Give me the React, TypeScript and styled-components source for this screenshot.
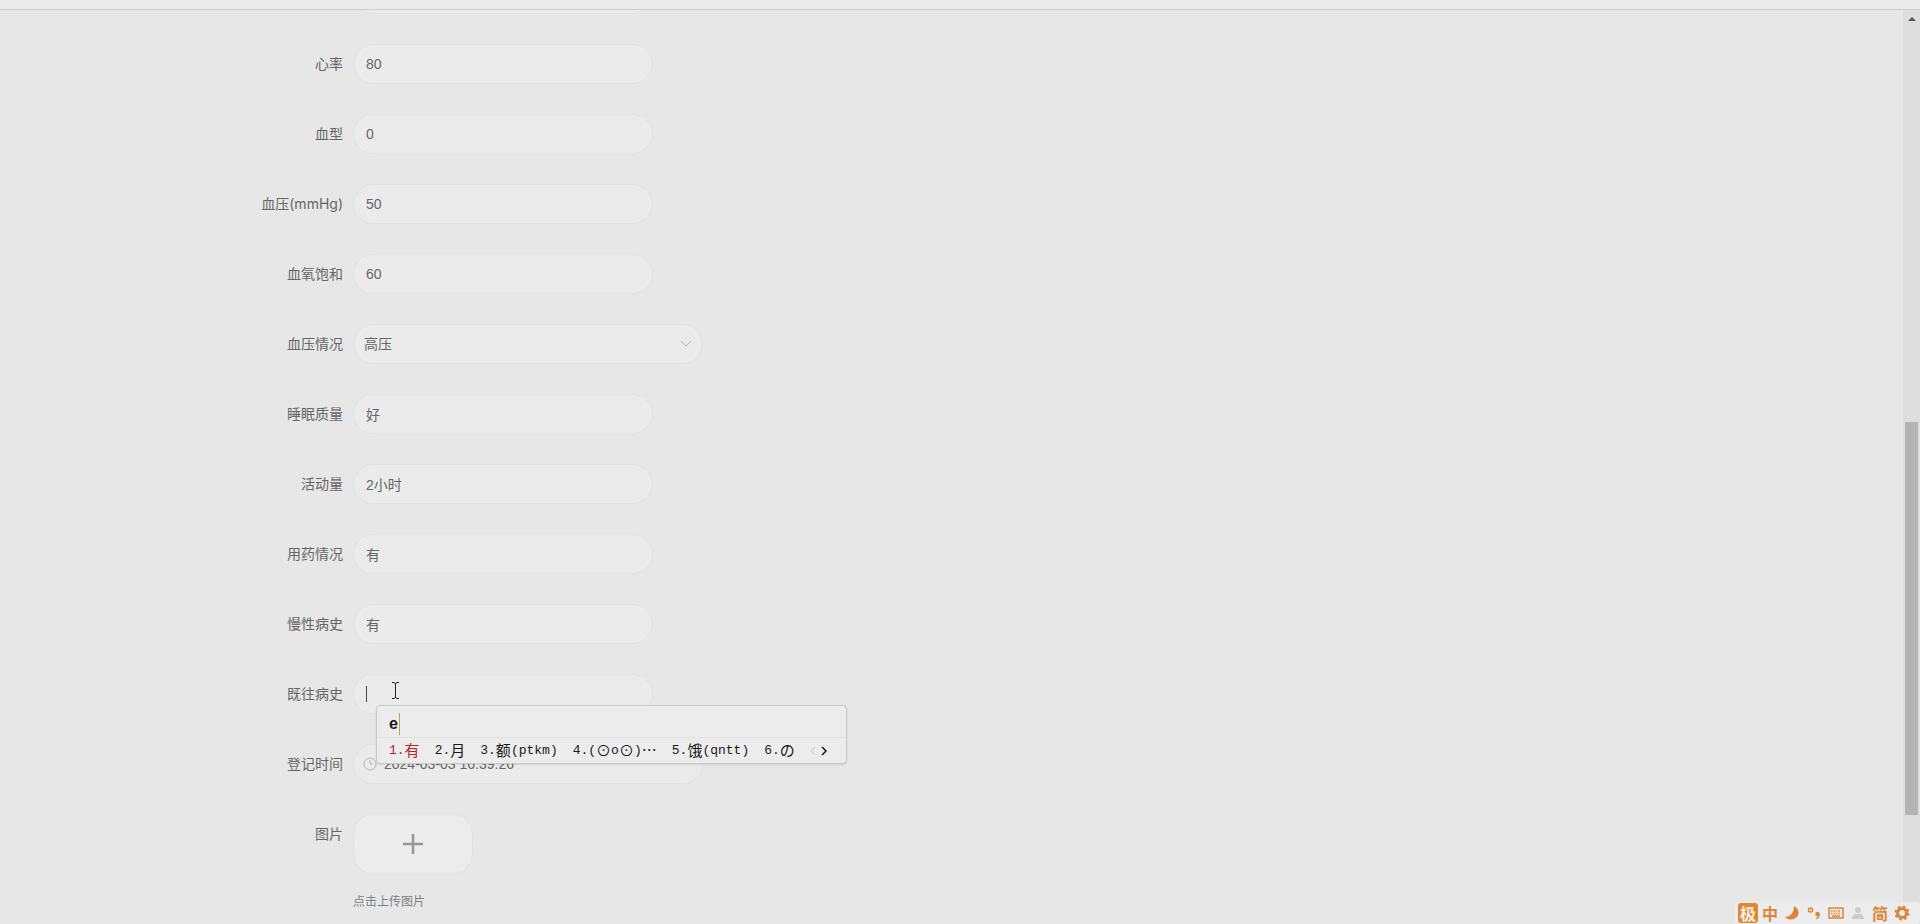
import React from "react";
import styled, { createGlobalStyle } from "styled-components";

const GlobalStyle = createGlobalStyle`
  * { box-sizing: border-box; }
  body {
    margin: 0;
    background: #e7e7e7;
    color: #666;
    font: 14px/20px "Liberation Sans", "Noto Sans CJK SC", sans-serif;
  }
  button, input, select { font: inherit; color: inherit; }
`;

const Screen = styled.div`
  position: relative;
  display: flex;
  flex-direction: column;
  height: 100vh;
  overflow: hidden;
`;

const TopBar = styled.header`
  flex: none;
  height: 10px;
  background: #ebebeb;
  border-bottom: 1px solid #cecece;
`;

const Body = styled.div`
  flex: 1;
  display: flex;
  min-height: 0;
`;

const Main = styled.main`
  flex: 1;
  overflow: hidden;
`;

const Form = styled.form`
  display: flex;
  flex-direction: column;
  gap: 30px;
  margin-top: -36px;
  padding-left: 153px;
`;

const Row = styled.div`
  display: flex;
  align-items: flex-start;
`;

const Label = styled.label`
  flex: none;
  width: 200px;
  padding-right: 10px;
  font-family: Inter, "Noto Sans CJK SC", sans-serif;
  line-height: 40px;
  text-align: right;
`;

const Control = styled.div<{ $wide?: boolean }>`
  position: relative;
  width: ${(p) => (p.$wide ? 350 : 300)}px;
`;

const fieldSkin = `
  display: block;
  width: 100%;
  height: 40px;
  border: 1px solid #e1e1e1;
  border-radius: 20px;
  background: #ebebeb;
  outline: none;
`;

const TextInput = styled.input<{ $icon?: boolean }>`
  ${fieldSkin}
  padding: 0 12px 0 ${(p) => (p.$icon ? 30 : 12)}px;
`;

const Select = styled.select`
  ${fieldSkin}
  appearance: none;
  padding: 0 30px 0 10px;
`;

const FieldIcon = styled.svg<{ $side: "left" | "right" }>`
  position: absolute;
  top: 13px;
  ${(p) => p.$side}: 10px;
  width: 14px;
  height: 14px;
  fill: none;
  stroke: #b4b4b4;
  pointer-events: none;
`;

const Caret = styled.span`
  position: absolute;
  top: 12px;
  left: 13px;
  width: 1px;
  height: 16px;
  background: #444;
`;

const Pointer = styled.svg`
  position: absolute;
  top: 8px;
  left: 38px;
  width: 9px;
  height: 17px;
  fill: none;
  stroke: #222;
`;

const Upload = styled.div`
  display: flex;
  flex-direction: column;
  gap: 18px;
`;

const UploadButton = styled.button`
  display: flex;
  align-items: center;
  justify-content: center;
  width: 120px;
  height: 60px;
  padding: 0;
  border: 1px solid #e1e1e1;
  border-radius: 20px;
  background: #ececec;
`;

const Tip = styled.p`
  margin: 0;
  font-size: 12px;
  color: #7d8086;
`;

const ImeWindow = styled.div`
  position: absolute;
  z-index: 2;
  top: 31px;
  left: 23px;
  width: 471px;
  border: 1px solid #c9c9c9;
  border-radius: 4px;
  background: #ececec;
  color: #1a1a1a;
  box-shadow: 0 1px 2px rgba(0, 0, 0, 0.1);
`;

const Composition = styled.div`
  display: flex;
  align-items: center;
  height: 32px;
  padding: 4px 12px 0;
  border-bottom: 1px solid #e2e2e2;
  font-size: 16px;
  font-weight: bold;

  &::after {
    content: "";
    width: 1px;
    height: 22px;
    margin-left: 1px;
    background: #d39a45;
  }
`;

const Candidates = styled.div`
  display: flex;
  align-items: center;
  gap: 15px;
  height: 25px;
  padding: 0 12px;
`;

const Candidate = styled.button<{ $active?: boolean }>`
  display: flex;
  align-items: center;
  padding: 0;
  border: 0;
  background: none;
  color: ${(p) => (p.$active ? "#b8232b" : "#1a1a1a")};
  font: 13px/20px "Liberation Mono", monospace;
`;

const Wide = styled.span`
  padding-bottom: 2px;
  font: 15px/20px "Noto Sans CJK SC", sans-serif;
`;

const Pager = styled.svg`
  width: 20px;
  height: 12px;
  fill: none;
`;

const Scrollbar = styled.div`
  flex: none;
  display: flex;
  flex-direction: column;
  align-items: center;
  width: 17px;
  background: #dedede;
`;

const ScrollArrow = styled.button`
  flex: none;
  display: flex;
  align-items: center;
  justify-content: center;
  width: 17px;
  height: 17px;
  padding: 0;
  border: 0;
  background: none;
`;

const Track = styled.div<{ $share: number }>`
  flex: ${(p) => p.$share} 0 0;
`;

const Thumb = styled(Track)`
  width: 13px;
  background: #b4b4b4;
`;

const Tray = styled.div`
  position: absolute;
  right: 0;
  bottom: 0;
  z-index: 3;
  display: flex;
  align-items: center;
  gap: 2px;
  height: 22px;
  padding: 0 8px 0 4px;
  border-radius: 4px;
  background: #ececec;
`;

const TrayButton = styled.button<{ $filled?: boolean }>`
  display: flex;
  align-items: center;
  justify-content: center;
  width: 20px;
  height: 20px;
  padding: 0;
  border: 0;
  border-radius: 3px;
  background: ${(p) => (p.$filled ? "#dd8a33" : "none")};
  color: ${(p) => (p.$filled ? "#f5efe8" : "#d9863a")};
  font: bold 16px/20px "Noto Sans CJK SC", sans-serif;
`;

type Field = { id: string; label: string; value: string };

const vitals: Field[] = [
  { id: "rate", label: "心率", value: "80" },
  { id: "type", label: "血型", value: "0" },
  { id: "pressure", label: "血压(mmHg)", value: "50" },
  { id: "oxygen", label: "血氧饱和", value: "60" },
];

const habits: Field[] = [
  { id: "sleep", label: "睡眠质量", value: "好" },
  { id: "activity", label: "活动量", value: "2小时" },
  { id: "medicine", label: "用药情况", value: "有" },
  { id: "chronic", label: "慢性病史", value: "有" },
];

function TextRow({ id, label, value }: Field) {
  return (
    <Row>
      <Label htmlFor={id}>{label}</Label>
      <Control>
        <TextInput id={id} defaultValue={value} />
      </Control>
    </Row>
  );
}

function ImePanel() {
  return (
    <ImeWindow>
      <Composition>e</Composition>
      <Candidates>
        <Candidate type="button" $active>1.<Wide>有</Wide></Candidate>
        <Candidate type="button">2.<Wide>月</Wide></Candidate>
        <Candidate type="button">3.<Wide>额</Wide>(ptkm)</Candidate>
        <Candidate type="button">4.(<Wide>⊙</Wide>o<Wide>⊙</Wide>)<Wide>…</Wide></Candidate>
        <Candidate type="button">5.<Wide>饿</Wide>(qntt)</Candidate>
        <Candidate type="button">6.<Wide>の</Wide></Candidate>
        <Pager viewBox="0 0 20 12">
          <path d="M5 2L1 6l4 4" stroke="#c4c4c4" />
          <path d="M12 2l4 4-4 4" stroke="#1a1a1a" strokeWidth="1.5" />
        </Pager>
      </Candidates>
    </ImeWindow>
  );
}

function ImeTray() {
  return (
    <Tray>
      <TrayButton type="button" $filled>极</TrayButton>
      <TrayButton type="button">中</TrayButton>
      <TrayButton type="button" aria-label="moon">
        <svg width="14" height="14" viewBox="0 0 14 14" fill="currentColor">
          <path d="M9 0c4 2 6 6 3.500 10C10 14 4 15 0 11c5 0 9-4 9-11z" />
        </svg>
      </TrayButton>
      <TrayButton type="button" aria-label="punctuation">
        <svg width="14" height="14" viewBox="0 0 14 14" fill="currentColor">
          <circle cx="3.5" cy="4" r="2" fill="none" stroke="currentColor" strokeWidth="1.5" />
          <circle cx="10.5" cy="8" r="2.3" />
          <path d="M12.8 8c0 3-1.500 5-4 5.500v-1.200c1.500-.5 2-1.500 2-3z" />
        </svg>
      </TrayButton>
      <TrayButton type="button" aria-label="keyboard">
        <svg width="16" height="12" viewBox="0 0 16 12" fill="none" stroke="currentColor" strokeWidth="1.5">
          <rect x="1" y="1" width="14" height="10" />
          <path d="M3 4h10M3 6.500h10" strokeDasharray="1.5 1" />
          <path d="M4 9h8" />
        </svg>
      </TrayButton>
      <TrayButton type="button" aria-label="account">
        <svg width="12" height="14" viewBox="0 0 12 14" fill="#cccccc">
          <circle cx="6" cy="4" r="3" />
          <path d="M0 13c0-3 2-5 4-5h4c2 0 4 2 4 5z" />
        </svg>
      </TrayButton>
      <TrayButton type="button">简</TrayButton>
      <TrayButton type="button" aria-label="settings">
        <svg width="16" height="16" viewBox="0 0 16 16" fill="none" stroke="currentColor">
          <circle cx="8" cy="8" r="4.5" strokeWidth="3" />
          <circle cx="8" cy="8" r="6.5" strokeWidth="2" strokeDasharray="2.6 2.5" />
        </svg>
      </TrayButton>
    </Tray>
  );
}

export default function App() {
  return (
    <Screen>
      <GlobalStyle />
      <TopBar />
      <Body>
        <Main>
          <Form>
            <TextRow id="previous" label="" value="" />
            {vitals.map((f) => <TextRow key={f.id} {...f} />)}
            <Row>
              <Label htmlFor="level">血压情况</Label>
              <Control $wide>
                <Select id="level" defaultValue="高压">
                  <option>高压</option>
                </Select>
                <FieldIcon $side="right" viewBox="0 0 14 14">
                  <path d="M2 4l5 5 5-5" />
                </FieldIcon>
              </Control>
            </Row>
            {habits.map((f) => <TextRow key={f.id} {...f} />)}
            <Row>
              <Label htmlFor="history">既往病史</Label>
              <Control>
                <TextInput id="history" />
                <Caret />
                <Pointer viewBox="0 0 9 17">
                  <path d="M1 .5h2l1.500 1L6 .5h2M4.500 1v15M1 16.500h2l1.500-1 1.500 1h2" />
                </Pointer>
                <ImePanel />
              </Control>
            </Row>
            <Row>
              <Label htmlFor="time">登记时间</Label>
              <Control $wide>
                <TextInput id="time" $icon defaultValue="2024-03-03 16:39:26" />
                <FieldIcon $side="left" viewBox="0 0 14 14">
                  <circle cx="7" cy="7" r="6" />
                  <path d="M7 3v4h3" />
                </FieldIcon>
              </Control>
            </Row>
            <Row>
              <Label htmlFor="picture">图片</Label>
              <Upload>
                <UploadButton id="picture" type="button">
                  <svg width="22" height="22" viewBox="0 0 22 22" stroke="#969696" strokeWidth="2.5" strokeLinecap="round">
                    <path d="M11 2v18M2 11h18" />
                  </svg>
                </UploadButton>
                <Tip>点击上传图片</Tip>
              </Upload>
            </Row>
          </Form>
        </Main>
        <Scrollbar>
          <ScrollArrow type="button" aria-label="scroll up">
            <svg width="8" height="4" viewBox="0 0 8 4" fill="#555"><path d="M4 0l4 4H0z" /></svg>
          </ScrollArrow>
          <Track $share={395} />
          <Thumb $share={393} />
          <Track $share={109} />
        </Scrollbar>
      </Body>
      <ImeTray />
    </Screen>
  );
}
